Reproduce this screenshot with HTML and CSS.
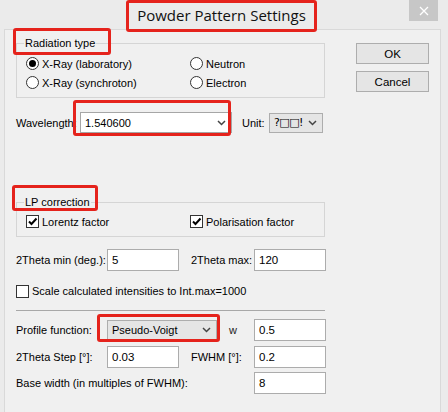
FILE: index.html
```html
<!DOCTYPE html>
<html>
<head>
<meta charset="utf-8">
<link rel="stylesheet" href="styles.css">
</head>
<body>
<div class="window">
  <div class="titlebar">
    <div class="title">Powder Pattern Settings</div>
    <div class="close"><svg width="10" height="10" viewBox="0 0 10 10"><path d="M1 1L9 9M9 1L1 9" stroke="#fff" stroke-width="1.3" fill="none"/></svg></div>
  </div>
  <div class="client">
    <div class="main">
      <div class="group">
        <div class="legend">Radiation type</div>
        <div class="opts">
          <div class="opt"><span class="radio checked"></span>X-Ray (laboratory)</div>
          <div class="opt"><span class="radio"></span>Neutron</div>
          <div class="opt"><span class="radio"></span>X-Ray (synchroton)</div>
          <div class="opt"><span class="radio"></span>Electron</div>
        </div>
      </div>
      <div class="row wave">
        <span class="lbl w-wave">Wavelength:</span>
        <div class="combo white wl"><span>1.540600</span><svg class="chev" width="9" height="6" viewBox="0 0 9 6"><path d="M1 1L4.5 4.5L8 1" stroke="#444" stroke-width="1.5" fill="none"/></svg></div>
        <span class="lbl w-unit">Unit:</span>
        <div class="combo gray unitc"><span class="ut">?□□!</span><svg class="chev" width="9" height="6" viewBox="0 0 9 6"><path d="M1 1L4.5 4.5L8 1" stroke="#444" stroke-width="1.5" fill="none"/></svg></div>
      </div>
      <div class="group lp">
        <div class="legend">LP correction</div>
        <div class="opts">
          <div class="opt"><span class="check"><svg width="11" height="11" viewBox="0 0 11 11"><path d="M2 5.5L4.5 8L9.5 2.5" stroke="#000" stroke-width="2" fill="none"/></svg></span>Lorentz factor</div>
          <div class="opt"><span class="check"><svg width="11" height="11" viewBox="0 0 11 11"><path d="M2 5.5L4.5 8L9.5 2.5" stroke="#000" stroke-width="2" fill="none"/></svg></span>Polarisation factor</div>
        </div>
      </div>
      <div class="row theta">
        <span class="lbl w-a">2Theta min (deg.):</span>
        <div class="input">5</div>
        <span class="lbl w-b">2Theta max:</span>
        <div class="input">120</div>
      </div>
      <div class="row scale">
        <span class="check"></span><span class="lbl">Scale calculated intensities to Int.max=1000</span>
      </div>
      <div class="sep"></div>
      <div class="row prof">
        <span class="lbl w-a">Profile function:</span>
        <div class="combo gray pv"><span>Pseudo-Voigt</span><svg class="chev" width="9" height="6" viewBox="0 0 9 6"><path d="M1 1L4.5 4.5L8 1" stroke="#444" stroke-width="1.5" fill="none"/></svg></div>
        <span class="lbl w-w">w</span>
        <div class="input">0.5</div>
      </div>
      <div class="row step">
        <span class="lbl w-a">2Theta Step [°]:</span>
        <div class="input">0.03</div>
        <span class="lbl w-b">FWHM [°]:</span>
        <div class="input">0.2</div>
      </div>
      <div class="row base">
        <span class="lbl w-base">Base width (in multiples of FWHM):</span>
        <div class="input">8</div>
      </div>
    </div>
    <div class="buttons">
      <div class="btn">OK</div>
      <div class="btn">Cancel</div>
    </div>
  </div>
  <div class="mark m-title"></div>
  <div class="mark m-rad"></div>
  <div class="mark m-wave"></div>
  <div class="mark m-lp"></div>
  <div class="mark m-pv"></div>
</div>
</body>
</html>
```
FILE: styles.css
```css
* { box-sizing: border-box; }
body {
  margin: 0;
  background: #ebebeb;
  font-family: "Liberation Sans", Arial, sans-serif;
  font-size: 11px;
  color: #000;
  overflow: hidden;
}
.window {
  position: relative;
  width: 448px;
  height: 412px;
}
.titlebar {
  height: 29px;
  display: grid;
  grid-template-columns: 1fr auto 1fr;
  padding-right: 5px;
}
.title {
  grid-column: 2;
  font-family: "Open Sans", "Noto Sans", sans-serif;
  font-size: 15px;
  line-height: 31px;
  color: #111;
}
.close {
  grid-column: 3;
  justify-self: end;
  margin-right: 5px;
  width: 29px;
  height: 21px;
  background: #c7c7c7;
  display: flex;
  align-items: center;
  justify-content: center;
}
.client {
  margin-left: 4px;
  width: 437px;
  height: 383px;
  border: 1px solid #d9d9d9;
  border-bottom: none;
  background: #f0f0f0;
  display: flex;
  padding: 13px 0 0 11px;
  gap: 30px;
}
.main {
  width: 310px;
  display: flex;
  flex-direction: column;
}
.group {
  width: 309px;
  border: 1px solid #d5d5d5;
  display: flex;
  flex-direction: column;
}
.legend {
  align-self: flex-start;
  margin: -8px 0 0 7px;
  padding: 0 1px;
  background: #f0f0f0;
  height: 14px;
  line-height: 14px;
}
.opts {
  display: grid;
  grid-template-columns: 164px auto;
  grid-auto-rows: 19px;
  margin-top: 4px;
  padding: 0 0 5px 9px;
}
.lp { margin-top: 69px; }
.lp .opts { margin-top: 3px; padding-bottom: 5px; }
.opt {
  display: flex;
  align-items: center;
  gap: 3px;
  white-space: nowrap;
}
.radio {
  width: 13px;
  height: 13px;
  border-radius: 50%;
  border: 1px solid #333;
  background: #fff;
  display: flex;
  align-items: center;
  justify-content: center;
}
.radio.checked::after {
  content: "";
  width: 7px;
  height: 7px;
  border-radius: 50%;
  background: #000;
}
.check {
  width: 13px;
  height: 13px;
  border: 1px solid #333;
  background: #fff;
  display: flex;
  align-items: center;
  justify-content: center;
  flex: none;
}
.row {
  display: flex;
  align-items: center;
  white-space: nowrap;
}
.lbl { flex: none; }
.wave { height: 21px; margin-top: 14px; }
.w-wave { width: 64px; }
.w-unit { width: 27px; margin-left: 10px; }
.combo {
  height: 21px;
  border: 1px solid #adadad;
  display: flex;
  align-items: center;
  justify-content: space-between;
  padding: 0 5px 0 4px;
  font-size: 11px;
  flex: none;
}
.combo.white { background: #fff; border-color: #a6a6a6; }
.combo.gray { background: #e5e5e5; }
.wl { width: 152px; }
.unitc { width: 54px; height: 20px; }
.ut { font-family: "DejaVu Sans", sans-serif; font-size: 11px; letter-spacing: -0.5px; }
.pv { width: 110px; height: 20px; }
.theta { height: 22px; margin-top: 12px; }
.w-a { width: 91px; }
.w-b { width: 63px; margin-left: 12px; }
.w-w { width: 37px; padding-left: 12px; color: #222; }
.w-base { width: 238px; }
.input {
  width: 72px;
  height: 22px;
  border: 1px solid #acacac;
  background: #fff;
  padding-left: 4px;
  font-size: 11.5px;
  line-height: 20px;
  flex: none;
}
.scale { height: 16px; margin-top: 12px; gap: 3px; }
.sep {
  width: 309px;
  height: 1px;
  background: #a8a8a8;
  margin-top: 11px;
}
.prof { height: 22px; margin-top: 8px; }
.step { height: 22px; margin-top: 5px; }
.base { height: 22px; margin-top: 4px; }
.buttons {
  display: flex;
  flex-direction: column;
  gap: 7px;
}
.btn {
  width: 73px;
  height: 21px;
  border: 1px solid #adadad;
  background: #e5e5e5;
  display: flex;
  align-items: center;
  justify-content: center;
  font-size: 11.5px;
}
.mark {
  position: absolute;
  border: 3px solid #e5231c;
  border-radius: 3px;
}
.m-title { left: 126px; top: 0; width: 191px; height: 32px; }
.m-rad { left: 13px; top: 28px; width: 98px; height: 27px; }
.m-wave { left: 73px; top: 100px; width: 158px; height: 36px; }
.m-lp { left: 12px; top: 185px; width: 86px; height: 26px; }
.m-pv { left: 97px; top: 314px; width: 123px; height: 28px; }
```
